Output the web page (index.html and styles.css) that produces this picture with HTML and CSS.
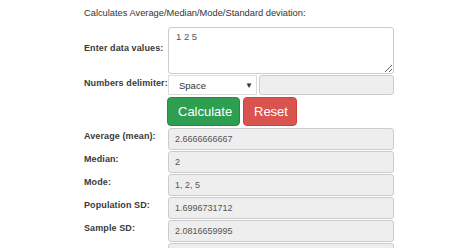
FILE: index.html
```html
<!DOCTYPE html>
<html lang="en">
<head>
  <meta charset="UTF-8">
  <title>Standard deviation calculator</title>
  <link rel="stylesheet" href="styles.css">
</head>
<body>
  <div class="calc">
    <p class="intro">Calculates Average/Median/Mode/Standard deviation:</p>
    <div class="row row-data">
      <label>Enter data values:</label>
      <textarea class="data">1 2 5</textarea>
    </div>
    <div class="row row-delim">
      <label>Numbers delimiter:</label>
      <div class="delim">
        <div class="select"><span>Space</span><span class="arrow">&#9660;</span></div>
        <div class="other"></div>
      </div>
    </div>
    <div class="row row-buttons">
      <span></span>
      <div class="buttons">
        <button class="btn btn-calc">Calculate</button>
        <button class="btn btn-reset">Reset</button>
      </div>
    </div>
    <div class="row result">
      <label>Average (mean):</label>
      <div class="out">2.6666666667</div>
    </div>
    <div class="row result">
      <label>Median:</label>
      <div class="out">2</div>
    </div>
    <div class="row result">
      <label>Mode:</label>
      <div class="out">1, 2, 5</div>
    </div>
    <div class="row result">
      <label>Population SD:</label>
      <div class="out">1.6996731712</div>
    </div>
    <div class="row result">
      <label>Sample SD:</label>
      <div class="out">2.0816659995</div>
    </div>
    <div class="row result">
      <label>Count:</label>
      <div class="out">3</div>
    </div>
  </div>
</body>
</html>
```

FILE: styles.css
```css
body {
  margin: 0;
  font-family: "Liberation Sans", Arial, sans-serif;
  color: #333;
  background: #fff;
  overflow: hidden;
}
.calc {
  padding: 7px 0 0 84px;
  width: 310px;
}
.intro {
  margin: 0 0 7px 0;
  font-size: 9.3px;
  line-height: 13px;
}
.row {
  display: grid;
  grid-template-columns: 84px 226px;
  align-items: start;
}
.row label {
  font-size: 9px;
  font-weight: bold;
  white-space: nowrap;
  letter-spacing: 0.1px;
  line-height: 13px;
  color: #3a3a3a;
}
.row-data label {
  padding-top: 15px;
}
.data {
  box-sizing: border-box;
  height: 47px;
  margin: 0;
  padding: 3px 7px;
  border: 1px solid #ccc;
  border-radius: 3px;
  font-family: inherit;
  font-size: 9.5px;
  color: #555;
}
.row-delim {
  margin-top: 1px;
}
.row-delim label {
  padding-top: 2px;
}
.delim {
  display: flex;
  gap: 2px;
  height: 20px;
}
.select {
  box-sizing: border-box;
  width: 89px;
  display: flex;
  justify-content: space-between;
  align-items: center;
  padding: 0 3px 0 10px;
  border: 1px solid #ddd;
  background: #fff;
  font-size: 9.5px;
  color: #333;
}
.arrow {
  font-size: 8px;
}
.other {
  flex: 1;
  border: 1px solid #ccc;
  border-radius: 3px;
  background: #eee;
}
.row-buttons {
  margin-top: 2px;
}
.buttons {
  display: flex;
  gap: 3px;
  margin-left: -1px;
}
.btn {
  height: 29px;
  padding: 0 10px;
  border: 1px solid transparent;
  border-radius: 4px;
  color: #fff;
  font-family: inherit;
  font-size: 13px;
}
.btn-calc {
  width: 73px;
  background: #2e9e51;
  border-color: #268a44;
}
.btn-reset {
  width: 54px;
  background: #d9534f;
  border-color: #d43f3a;
}
.result {
  margin-top: 2px;
}
.result + .result {
  margin-top: 1px;
}
.result label {
  padding-top: 2px;
}
.out {
  box-sizing: border-box;
  height: 22px;
  padding: 5px 6px;
  border: 1px solid #ccc;
  border-radius: 3px;
  background: #eee;
  font-size: 9px;
  line-height: 11px;
  color: #555;
}
```
